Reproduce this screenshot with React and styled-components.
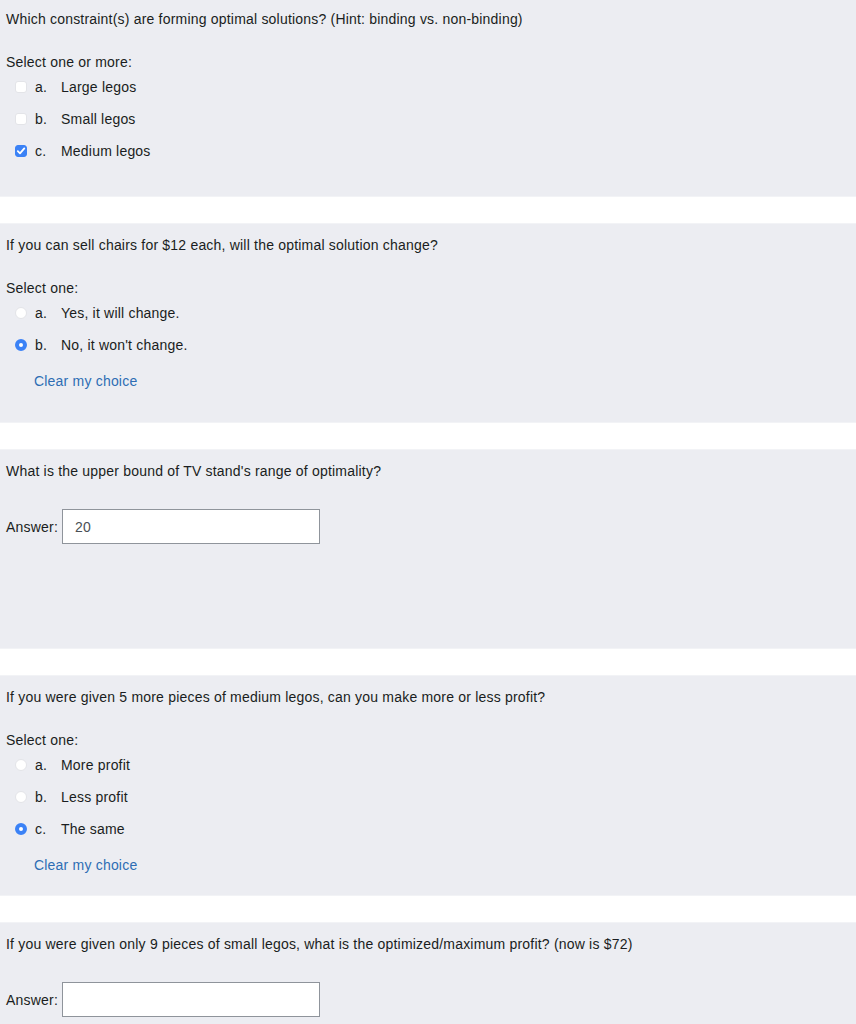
import React from 'react';
import styled, { createGlobalStyle } from 'styled-components';

const GlobalStyle = createGlobalStyle`
  html, body {
    margin: 0;
    padding: 0;
    background: #ffffff;
  }
  body {
    font-family: "Liberation Sans", Arial, Helvetica, sans-serif;
    font-size: 14px;
    letter-spacing: 0.2px;
    color: #1a1d21;
  }
`;

const Page = styled.div`
  display: flex;
  flex-direction: column;
  gap: 26px;
  margin-top: -3px;
`;

const Panel = styled.section`
  background: #ecedf2;
  box-sizing: border-box;
  min-height: 200px;
  padding: 12px 6px 20px;
  border-top: 1px solid #f2f3f6;
  border-bottom: 1px solid #f2f3f6;
`;

const Question = styled.div`
  line-height: 20px;
  margin-top: -1px;
`;

const Prompt = styled.div`
  line-height: 18px;
  margin-top: 24px;
`;

const OptionList = styled.div`
  display: flex;
  flex-direction: column;
`;

const OptionRow = styled.label`
  display: flex;
  align-items: center;
  height: 32px;
  padding-left: 9px;
`;

const CheckBox = styled.span`
  width: 12px;
  height: 12px;
  box-sizing: border-box;
  border-radius: 3px;
  background: ${p => (p.checked ? '#3b82f6' : '#ffffff')};
  border: 1px solid ${p => (p.checked ? '#3b82f6' : '#e3e4e8')};
  display: flex;
  align-items: center;
  justify-content: center;
  flex: none;
`;

const RadioDot = styled.span`
  width: 12px;
  height: 12px;
  box-sizing: border-box;
  border-radius: 50%;
  background: #ffffff;
  border: ${p => (p.checked ? '4px solid #3b82f6' : '1px solid #e3e4e8')};
  flex: none;
`;

const Letter = styled.span`
  width: 26px;
  margin-left: 8px;
  flex: none;
`;

const OptionText = styled.span``;

const ClearLink = styled.a`
  display: block;
  margin: 10px 0 0 28px;
  line-height: 20px;
  color: #2e6db4;
  text-decoration: none;
`;

const AnswerRow = styled.div`
  display: flex;
  align-items: center;
  gap: 4px;
  margin-top: 28px;
`;

const AnswerLabel = styled.span``;

const AnswerInput = styled.div`
  width: 258px;
  height: 35px;
  box-sizing: border-box;
  background: #ffffff;
  border: 1px solid #8f949b;
  padding: 0 12px;
  display: flex;
  align-items: center;
  color: #4a4f55;
`;

const Check = () => (
  <svg width="10" height="10" viewBox="0 0 10 10">
    <path d="M1.8 5.2 L4 7.4 L8.3 2.4" fill="none" stroke="#fff" strokeWidth="1.8" strokeLinecap="round" strokeLinejoin="round" />
  </svg>
);

const MultiQuestion = ({ question, prompt, options, multi, clear }) => (
  <Panel>
    <Question>{question}</Question>
    <Prompt>{prompt}</Prompt>
    <OptionList>
      {options.map(o => (
        <OptionRow key={o.letter}>
          {multi ? (
            <CheckBox checked={o.checked}>{o.checked && <Check />}</CheckBox>
          ) : (
            <RadioDot checked={o.checked} />
          )}
          <Letter>{o.letter}.</Letter>
          <OptionText>{o.text}</OptionText>
        </OptionRow>
      ))}
    </OptionList>
    {clear && <ClearLink href="#">Clear my choice</ClearLink>}
  </Panel>
);

const TextQuestion = ({ question, value }) => (
  <Panel>
    <Question>{question}</Question>
    <AnswerRow>
      <AnswerLabel>Answer:</AnswerLabel>
      <AnswerInput>{value}</AnswerInput>
    </AnswerRow>
  </Panel>
);

export default function App() {
  return (
    <>
      <GlobalStyle />
      <Page>
        <MultiQuestion
          multi
          question="Which constraint(s) are forming optimal solutions? (Hint: binding vs. non-binding)"
          prompt="Select one or more:"
          options={[
            { letter: 'a', text: 'Large legos' },
            { letter: 'b', text: 'Small legos' },
            { letter: 'c', text: 'Medium legos', checked: true },
          ]}
        />
        <MultiQuestion
          clear
          question="If you can sell chairs for $12 each, will the optimal solution change?"
          prompt="Select one:"
          options={[
            { letter: 'a', text: 'Yes, it will change.' },
            { letter: 'b', text: "No, it won't change.", checked: true },
          ]}
        />
        <TextQuestion
          question="What is the upper bound of TV stand's range of optimality?"
          value="20"
        />
        <MultiQuestion
          clear
          question="If you were given 5 more pieces of medium legos, can you make more or less profit?"
          prompt="Select one:"
          options={[
            { letter: 'a', text: 'More profit' },
            { letter: 'b', text: 'Less profit' },
            { letter: 'c', text: 'The same', checked: true },
          ]}
        />
        <TextQuestion
          question="If you were given only 9 pieces of small legos, what is the optimized/maximum profit? (now is $72)"
          value=""
        />
      </Page>
    </>
  );
}
